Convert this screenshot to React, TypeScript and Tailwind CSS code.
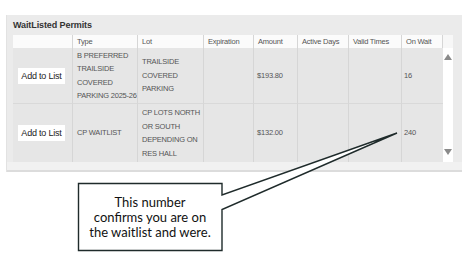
import React from "react";

const cols = "grid-cols-[60px_65px_66px_50px_44px_51px_53px_41px_10px]";

function Cell({ children, last }: { children?: React.ReactNode; last?: boolean }) {
  return (
    <div className={`flex items-center whitespace-nowrap pl-[4px] ${last ? "" : "border-r border-[#d6d6d6]"}`}>
      {children}
    </div>
  );
}

function Lines({ items }: { items: string[] }) {
  return (
    <div className="flex flex-col whitespace-nowrap leading-[13.5px]">
      {items.map((t) => (
        <span key={t}>{t}</span>
      ))}
    </div>
  );
}

function AddBtn() {
  return (
    <div className="flex w-full items-center justify-center">
      <span className="ml-[-2px] whitespace-nowrap bg-white px-[3px] py-[1px] text-[9px] leading-[14px] tracking-[-0.2px] text-[#222]">Add to List</span>
    </div>
  );
}

const rowCell = "bg-[#e6e6e6] overflow-hidden whitespace-nowrap";

export default function App() {
  const headers = ["", "Type", "Lot", "Expiration", "Amount", "Active Days", "Valid Times", "On Wait"];
  return (
    <div className="relative h-[260px] w-[474px] overflow-hidden bg-white" style={{ fontFamily: '"Liberation Sans", Arial, sans-serif' }}>
      <div className="pt-[15px] pl-[6px]">
        <div className="w-[456px] border-l border-[#e2e2e2] bg-[#ebebeb]">
          <div className="pl-[6px] pt-[5px] pb-[4px] text-[9px] font-bold leading-[11px] tracking-[-0.1px] text-[#333]">WaitListed Permits</div>
          <div className="pl-[6px] pr-[9px]">
            <div className={`grid ${cols} h-[13px] bg-[#fbfbfb] text-[7.5px] tracking-[-0.2px] text-[#555]`}>
              {headers.map((h, i) => (
                <Cell key={i}>{h}</Cell>
              ))}
              <div className="bg-[#f7f7f7]" />
            </div>
            <div className={`grid ${cols} text-[7.5px] tracking-[-0.2px] text-[#555]`}>
              <div className={`${rowCell} flex h-[56px] items-center border-r border-b border-r-[#d6d6d6] border-b-[#d9d9d9]`}><AddBtn /></div>
              <div className={`${rowCell} flex items-center border-r border-b border-r-[#d6d6d6] border-b-[#d9d9d9] pl-[4px]`}><Lines items={["B PREFERRED", "TRAILSIDE", "COVERED", "PARKING 2025-26"]} /></div>
              <div className={`${rowCell} flex items-center border-r border-b border-r-[#d6d6d6] border-b-[#d9d9d9] pl-[4px]`}><Lines items={["TRAILSIDE", "COVERED", "PARKING"]} /></div>
              <div className={`${rowCell} border-r border-b border-r-[#d6d6d6] border-b-[#d9d9d9]`} />
              <div className={`${rowCell} flex items-center border-r border-b border-r-[#d6d6d6] border-b-[#d9d9d9] pl-[3px]`}>$193.80</div>
              <div className={`${rowCell} border-r border-b border-r-[#d6d6d6] border-b-[#d9d9d9]`} />
              <div className={`${rowCell} border-r border-b border-r-[#d6d6d6] border-b-[#d9d9d9]`} />
              <div className={`${rowCell} flex items-center border-b border-[#d9d9d9] pl-[2px]`}>16</div>
              <div className="row-span-2 flex flex-col items-center justify-between bg-white pt-[6px] pb-[7px]">
                <svg width="8" height="6" viewBox="0 0 8 6"><path d="M4 0L8 6H0Z" fill="#8a8a8a" /></svg>
                <svg width="8" height="6" viewBox="0 0 8 6"><path d="M0 0H8L4 6Z" fill="#8a8a8a" /></svg>
              </div>
              <div className={`${rowCell} flex h-[58px] items-center border-r border-[#d6d6d6]`}><AddBtn /></div>
              <div className={`${rowCell} flex items-center border-r border-[#d6d6d6] pl-[4px]`}>CP WAITLIST</div>
              <div className={`${rowCell} flex items-center border-r border-[#d6d6d6] pl-[4px]`}><Lines items={["CP LOTS NORTH", "OR SOUTH", "DEPENDING ON", "RES HALL"]} /></div>
              <div className={`${rowCell} border-r border-[#d6d6d6]`} />
              <div className={`${rowCell} flex items-center border-r border-[#d6d6d6] pl-[3px]`}>$132.00</div>
              <div className={`${rowCell} border-r border-[#d6d6d6]`} />
              <div className={`${rowCell} border-r border-[#d6d6d6]`} />
              <div className={`${rowCell} flex items-center pl-[2px]`}>240</div>
            </div>
          </div>
          <div className="h-[10px] border-b-2 border-[#dcdcdc] bg-[#f1f1f1]" />
        </div>
      </div>

      <svg className="absolute left-0 top-0" width="474" height="260" viewBox="0 0 474 260">
        <path d="M78.5 183.5H222V195L397 133L222 209.5V250.5H78.5Z" fill="white" stroke="#1f2b2b" strokeWidth="1.4" strokeLinejoin="miter" />
      </svg>
      <div
        className="absolute left-[79px] top-[184px] flex h-[66px] w-[142px] flex-col items-center justify-center whitespace-nowrap text-center text-[13px] leading-[15px] text-[#111]"
        style={{ fontFamily: 'Lato, "Noto Sans", sans-serif' }}
      >
        <span>This number</span>
        <span>confirms you are on</span>
        <span>the waitlist and were.</span>
      </div>
    </div>
  );
}
